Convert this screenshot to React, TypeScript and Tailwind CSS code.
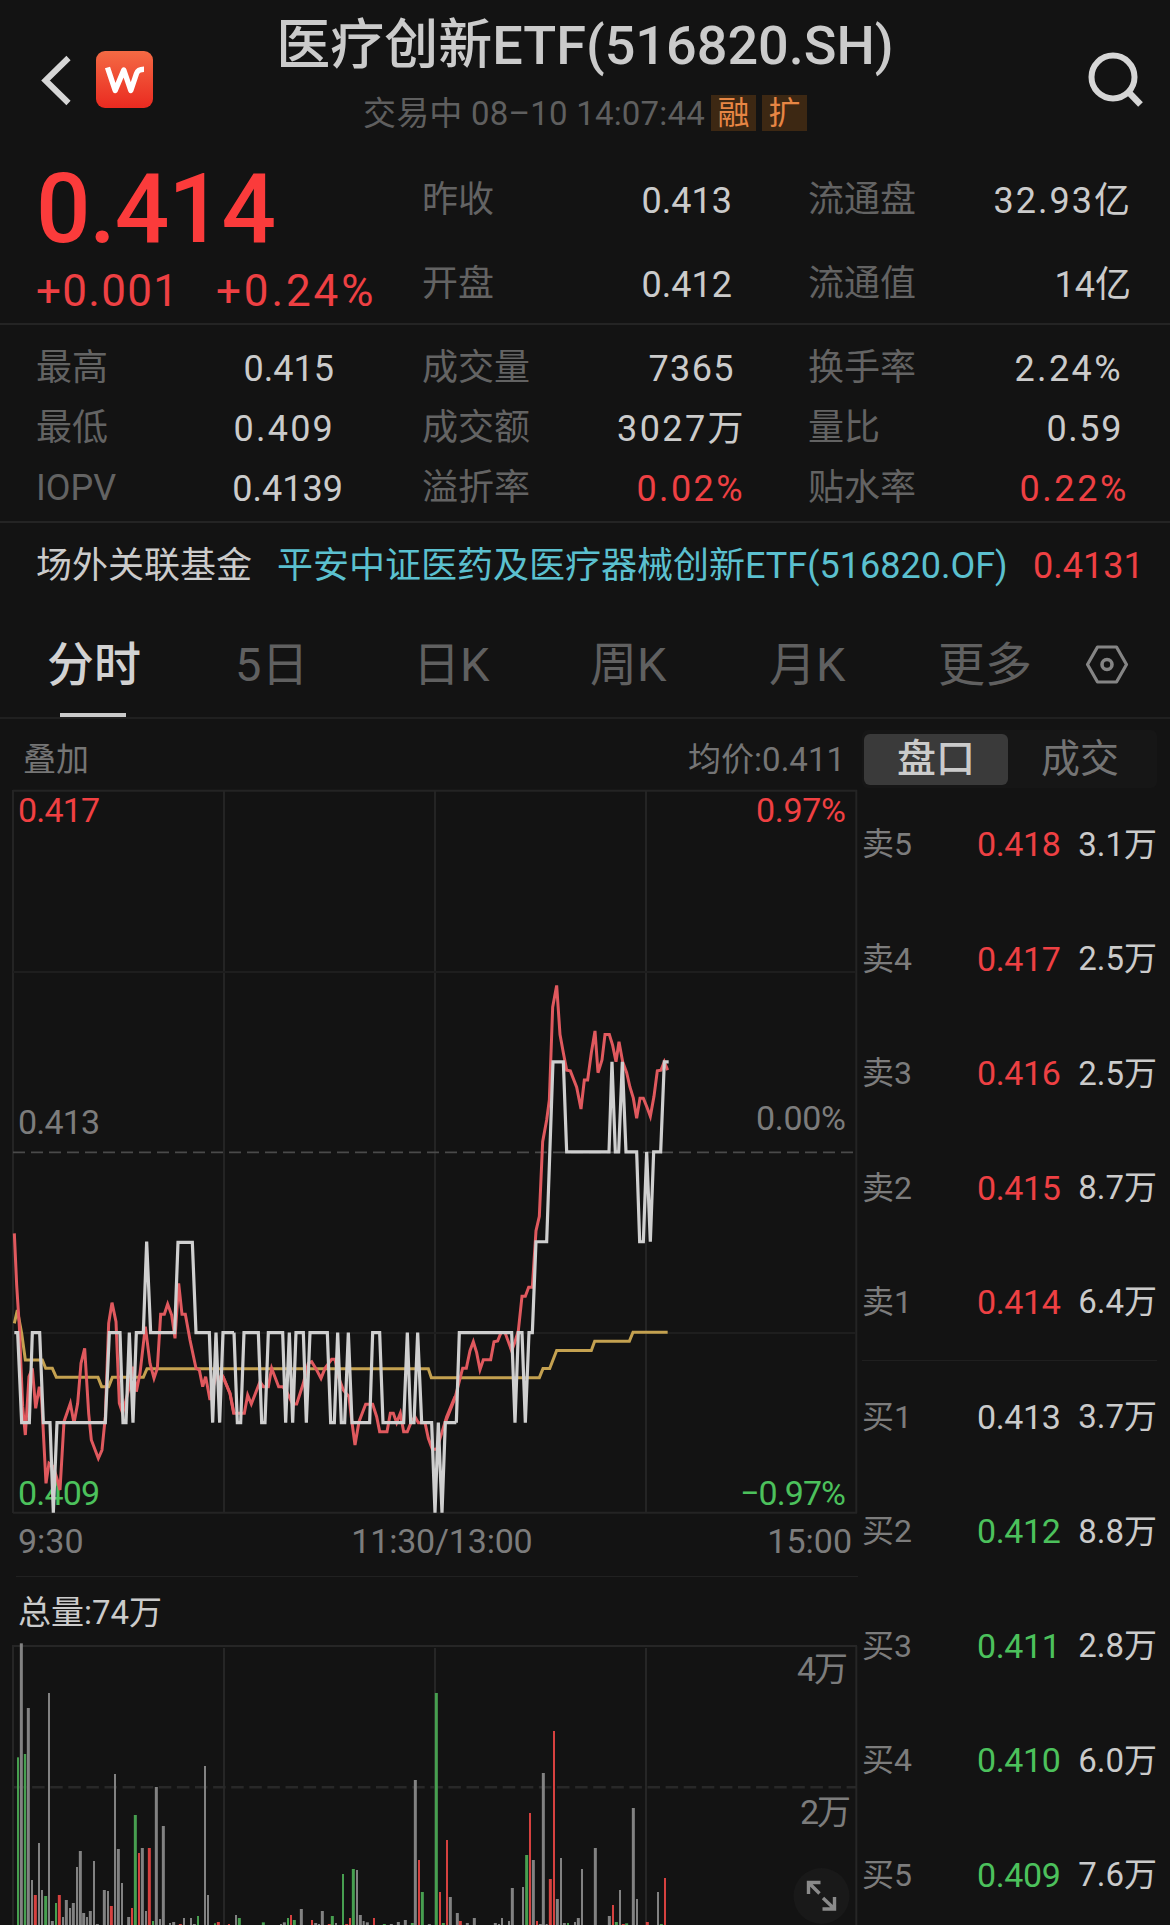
import React from "react";

type Tone = "r" | "g" | "n";

const toneText: Record<Tone, string> = {
  r: "text-[#ee4043]",
  g: "text-[#4cc15c]",
  n: "text-[#cbcbcb]",
};

const barFill: Record<Tone, string> = { r: "#d6413f", g: "#479f50", n: "#828282" };

/* Price polylines: morning session in two parts, then the afternoon. */
const sections = [
  {
    transform: "translate(0 1200) scale(0.33333)",
    avg: "43,370 52,330 65,400 76,480 127,480 137,505 157,505 169,532 294,532 305,560 326,560 337,532 430,532 441,506 702,506",
    index:
      "43,100 50,255 58,380 68,620 76,705 87,530 97,505 107,625 118,560 125,600 138,850 147,790 160,800 172,840 180,870 192,665 211,610 222,670 233,610 243,490 254,445 266,640 274,720 295,775 306,750 316,650 326,370 336,308 348,365 358,610 368,640 378,600 388,560 399,500 409,575 420,520 436,380 450,490 462,535 472,505 482,343 493,343 503,312 515,345 525,415 536,250 546,343 556,343 570,420 588,505 598,510 608,560 617,530 630,600 640,560 650,520 660,540 669,530 690,580 702,640",
    price:
      "43,398 53,398 65,668 88,668 97,398 119,398 130,668 150,668 160,938 171,668 316,668 328,398 360,398 369,668 378,668 388,398 399,668 409,398 430,398 440,125 452,398 524,398 534,127 577,127 588,398 628,398 638,668 648,398 659,668 669,398 702,398",
  },
  {
    transform: "translate(225 1200) scale(0.33333)",
    avg: "27,506 610,506 619,533 704,533",
    index:
      "-6,530 15,580 26,640 58,640 68,585 79,612 105,545 115,560 130,560 140,505 161,560 173,560 185,575 203,612 215,612 235,550 250,490 260,485 275,510 288,535 300,505 320,478 330,478 340,530 355,570 372,590 380,660 390,735 402,665 422,613 443,613 455,650 464,695 486,695 496,640 505,640 515,668 526,640 536,695 547,695 559,665 570,650 580,668 600,668 610,715 622,748 635,748 650,700 665,650 690,590",
    price:
      "27,398 37,668 47,668 57,398 100,398 110,668 120,668 130,398 173,398 182,668 193,398 203,668 213,398 235,398 244,668 255,398 307,398 317,668 328,668 338,398 349,668 359,668 370,398 381,668 434,668 443,398 464,398 474,668 536,668 547,398 557,668 567,668 578,398 590,668 620,668 630,938 640,668 651,938 661,668 694,668",
  },
  {
    transform: "translate(400 960) scale(0.33333 0.36352)",
    avg: "170,1149 418,1149 429,1124 449,1124 470,1074 574,1074 584,1049 688,1049 699,1024 803,1024",
    index:
      "137,1270 165,1205 188,1123 199,1123 210,1075 220,1050 230,1080 240,1127 250,1100 272,1100 282,1050 293,1048 303,1025 315,1025 335,1075 345,1050 355,1020 366,925 376,925 386,900 397,900 408,745 418,705 428,500 440,440 448,385 458,130 470,70 480,205 490,255 500,303 511,305 530,350 543,410 553,330 563,330 574,255 585,195 594,310 606,275 615,205 628,205 638,235 648,280 657,225 668,280 680,310 690,350 700,380 710,435 720,380 730,380 740,403 751,430 762,375 772,305 783,303 793,280 803,303",
    price:
      "169,1273 178,1025 335,1025 345,1273 355,1025 366,1025 376,1273 387,1025 397,1025 408,775 440,775 459,280 490,280 500,528 627,528 636,280 646,528 656,528 667,280 678,528 710,528 719,775 730,775 740,528 751,775 761,528 782,528 793,280 806,280",
  },
];

/* Volume bars: centre x, top y, width (thirds of a pixel) and tone. */
const bars: [number, number, number, Tone][] = [
  [54, 682, 6, "g"], [64, 340, 9, "n"], [75, 672, 7, "g"], [85, 534, 9, "n"], [96, 1050, 6, "n"],
  [106, 1095, 9, "r"], [117, 939, 6, "n"], [126, 1080, 6, "n"], [137, 1098, 9, "g"], [147, 489, 6, "n"],
  [157, 1173, 9, "n"], [168, 1119, 6, "g"], [178, 1095, 9, "r"], [189, 1161, 6, "n"], [199, 1110, 9, "n"],
  [210, 1134, 6, "n"], [220, 1119, 9, "n"], [231, 1011, 6, "n"], [241, 963, 9, "n"], [251, 1149, 9, "n"],
  [261, 1161, 6, "n"], [271, 1143, 9, "n"], [282, 993, 6, "n"], [292, 1182, 9, "n"], [313, 1080, 9, "n"],
  [324, 1083, 6, "n"], [334, 1128, 9, "r"], [345, 732, 6, "n"], [355, 957, 9, "n"], [366, 1059, 6, "n"],
  [386, 1161, 9, "n"], [396, 1134, 6, "r"], [406, 855, 9, "g"], [417, 969, 6, "r"], [427, 954, 9, "n"],
  [438, 1143, 6, "n"], [448, 954, 9, "r"], [459, 1173, 6, "g"], [469, 771, 9, "n"], [480, 1167, 6, "n"],
  [490, 888, 9, "n"], [510, 1179, 6, "n"], [521, 1176, 9, "n"], [541, 1182, 9, "r"], [552, 1164, 6, "n"],
  [573, 1164, 6, "n"], [583, 1182, 9, "n"], [594, 1158, 6, "g"], [615, 708, 6, "n"], [624, 1095, 6, "n"],
  [645, 1180, 6, "g"], [655, 1176, 9, "r"], [687, 1182, 6, "r"], [708, 1155, 6, "n"], [718, 1164, 9, "g"],
  [790, 1177, 9, "g"], [843, 1182, 6, "n"], [853, 1177, 9, "n"], [864, 1164, 6, "g"], [873, 1155, 6, "r"],
  [883, 1170, 9, "g"], [904, 1137, 9, "n"], [936, 1170, 6, "r"], [947, 1179, 9, "n"], [957, 1182, 6, "n"],
  [967, 1143, 9, "n"], [988, 1182, 9, "r"], [997, 1158, 9, "g"], [1008, 1179, 6, "n"], [1029, 1032, 6, "g"],
  [1040, 1182, 9, "r"], [1050, 1164, 6, "r"], [1060, 1017, 9, "g"], [1071, 1020, 6, "n"], [1081, 1155, 9, "n"],
  [1091, 1173, 6, "n"], [1102, 1177, 9, "n"], [1122, 1164, 6, "r"], [1153, 1182, 9, "g"], [1174, 1182, 9, "n"],
  [1195, 1176, 9, "n"], [1216, 1170, 9, "n"], [1237, 1179, 9, "g"], [1246, 750, 9, "n"], [1257, 990, 6, "r"],
  [1267, 1086, 9, "g"], [1288, 1182, 9, "n"], [1309, 489, 9, "g"], [1320, 1086, 6, "r"], [1330, 1179, 9, "g"],
  [1341, 930, 6, "r"], [1351, 1101, 9, "n"], [1372, 1149, 9, "n"], [1381, 1173, 9, "r"], [1402, 1179, 9, "n"],
  [1423, 1164, 9, "n"], [1486, 1179, 9, "n"], [1497, 1182, 6, "n"], [1506, 1164, 6, "n"], [1527, 1173, 6, "n"],
  [1537, 1074, 9, "n"], [1569, 1071, 6, "n"], [1580, 975, 9, "g"], [1590, 849, 6, "r"], [1600, 990, 9, "n"],
  [1611, 1173, 6, "r"], [1621, 1182, 9, "n"], [1630, 729, 9, "n"], [1640, 1182, 6, "n"], [1651, 1047, 9, "r"],
  [1662, 603, 6, "r"], [1672, 1107, 9, "n"], [1683, 984, 6, "n"], [1693, 1179, 9, "n"], [1704, 1179, 6, "g"],
  [1725, 1176, 6, "n"], [1735, 1164, 9, "n"], [1746, 1017, 6, "n"], [1786, 954, 9, "n"], [1828, 1158, 9, "n"],
  [1839, 1125, 6, "r"], [1849, 1176, 9, "g"], [1860, 1080, 6, "n"], [1870, 1182, 9, "r"], [1880, 1180, 9, "g"],
  [1900, 834, 9, "n"], [1911, 1107, 6, "n"], [1942, 1176, 9, "r"], [1974, 1086, 6, "n"], [1984, 1182, 9, "g"],
  [1995, 1044, 6, "r"],
];

function ChartLabel({ x, y, w, fill, children }: { x: number; y: number; w: number; fill: string; children: string }) {
  return (
    <text x={x} y={y} fontSize={34} fill={fill} textLength={w} lengthAdjust="spacing">
      {children}
    </text>
  );
}

function PriceChart() {
  return (
    <svg className="block h-[726px] w-[858px]" viewBox="0 789 858 726" fill="none">
      <g stroke="#242424" strokeWidth={2}>
        <path d="M13 790.7H857M13 1512.7H857" />
        <path d="M13 790V1513M224 790V1513M435 790V1513M646 790V1513M856.3 790V1513" />
        <path d="M13 972H856M13 1333H856" stroke="#1e1e1e" />
      </g>
      <path d="M13 1152.3H856" stroke="#4a4a4a" strokeWidth={1.8} strokeDasharray="12 6" />
      <ChartLabel x={18} y={822} w={82} fill="#f04042">0.417</ChartLabel>
      <ChartLabel x={756} y={822} w={90} fill="#f04042">0.97%</ChartLabel>
      <ChartLabel x={18} y={1134} w={82} fill="#7c7c7c">0.413</ChartLabel>
      <ChartLabel x={756} y={1130} w={90} fill="#7c7c7c">0.00%</ChartLabel>
      <ChartLabel x={18} y={1505} w={82} fill="#4cc15c">0.409</ChartLabel>
      <ChartLabel x={740} y={1505} w={106} fill="#4cc15c">−0.97%</ChartLabel>
      {(["avg", "index", "price"] as const).map((key) => (
        <g
          key={key}
          stroke={key === "avg" ? "#c4a150" : key === "index" ? "#e0595e" : "#cfcfcf"}
          strokeWidth={key === "price" ? 3.2 : 3}
        >
          {sections.map((s) => (
            <polyline key={s.transform} points={s[key]} transform={s.transform} vectorEffect="non-scaling-stroke" />
          ))}
        </g>
      ))}
    </svg>
  );
}

function VolumeChart() {
  return (
    <svg className="block h-[285px] w-[858px]" viewBox="0 1640 858 285" fill="none">
      <path d="M12 1646H857M13 1646V1925M224 1648V1925M435 1648V1925M646 1648V1925M856.3 1646V1925" stroke="#262626" strokeWidth={2} />
      <path d="M14 1787.3H856" stroke="#282828" strokeWidth={2.6} strokeDasharray="12.5 5.6" />
      {bars.map(([x, top, w, tone]) => (
        <rect key={x} x={(x - w / 2) / 3} y={1530 + top / 3} width={w / 3} height={400} fill={barFill[tone]} />
      ))}
      <ChartLabel x={797} y={1681} w={51} fill="#7c7c7c">4万</ChartLabel>
      <ChartLabel x={800} y={1824} w={51} fill="#7c7c7c">2万</ChartLabel>
      <circle cx={821.5} cy={1896} r={28} fill="#191919" />
      <path
        d="M808.5 1894V1882.5H820.5M809 1883L819.5 1893.5M834.5 1897V1909H822.5M834 1908.500L823 1898"
        stroke="#8a8a8a"
        strokeWidth={3.4}
      />
    </svg>
  );
}

function Cell({ label, value, tone = "n", className }: { label: string; value: string; tone?: Tone; className: string }) {
  return (
    <div className="flex w-[386px] shrink-0 items-center justify-between whitespace-nowrap leading-none">
      <span className="text-[36px] text-[#636363]">{label}</span>
      <span className={`pt-[2px] text-[36px] ${toneText[tone]} ${className}`}>{value}</span>
    </div>
  );
}

const tabs = [
  { label: "5日", className: "w-[178px]" },
  { label: "日K", className: "w-[177px]" },
  { label: "周K", className: "w-[179px]" },
  { label: "月K", className: "w-[169px]" },
  { label: "更多", className: "w-[147px]" },
];

const book: { label: string; price: string; volume: string; tone: Tone }[] = [
  { label: "卖5", price: "0.418", volume: "3.1万", tone: "r" },
  { label: "卖4", price: "0.417", volume: "2.5万", tone: "r" },
  { label: "卖3", price: "0.416", volume: "2.5万", tone: "r" },
  { label: "卖2", price: "0.415", volume: "8.7万", tone: "r" },
  { label: "卖1", price: "0.414", volume: "6.4万", tone: "r" },
  { label: "买1", price: "0.413", volume: "3.7万", tone: "n" },
  { label: "买2", price: "0.412", volume: "8.8万", tone: "g" },
  { label: "买3", price: "0.411", volume: "2.8万", tone: "g" },
  { label: "买4", price: "0.410", volume: "6.0万", tone: "g" },
  { label: "买5", price: "0.409", volume: "7.6万", tone: "g" },
];

function Header() {
  return (
    <header className="flex h-[145px] items-start justify-between">
      <div className="flex w-[240px] items-center pt-[50px] pl-[40px]">
        <svg className="mr-[22px] h-[58px] w-[34px]" viewBox="0 0 34 58" fill="none">
          <path d="M28.500 8L5.500 30.500L28.500 53" stroke="#d6d6d6" strokeWidth={6} />
        </svg>
        <svg className="h-[57px] w-[57px]" viewBox="0 0 57 57" fill="none">
          <defs>
            <linearGradient id="logo" x1="0" y1="0" x2="0" y2="1">
              <stop offset="0" stopColor="#f46a44" />
              <stop offset="1" stopColor="#ea2a20" />
            </linearGradient>
          </defs>
          <rect width="57" height="57" rx="9" fill="url(#logo)" />
          <path d="M11.500 16.500L19.200 39.500L27.800 19L34.800 39.500L40.500 22.500Q42 18.300 48 18.300" stroke="#fff" strokeWidth={5.4} strokeLinejoin="round" />
        </svg>
      </div>
      <div className="flex flex-col items-center whitespace-nowrap leading-none">
        <h1 className="mt-[19px] text-[54px] font-medium text-[#cbcbcb]">医疗创新ETF(516820.SH)</h1>
        <div className="mt-[22px] flex h-[36px] items-center">
          <span className="text-[33px] tracking-[0.2px] text-[#5f5f5f]">交易中 08–10 14:07:44</span>
          <span className="ml-[6px] flex h-[36px] w-[45px] items-center justify-center bg-[#3d2813] text-[32px] text-[#e78644]">融</span>
          <span className="ml-[6px] flex h-[36px] w-[45px] items-center justify-center bg-[#3d2813] text-[32px] text-[#e78644]">扩</span>
        </div>
      </div>
      <div className="flex w-[240px] justify-end pt-[48px] pr-[24px]">
        <svg className="h-[62px] w-[60px]" viewBox="0 0 60 62" fill="none" stroke="#d6d6d6">
          <circle cx="27" cy="29" r="21.500" strokeWidth={6} />
          <path d="M42 43.500L54.500 56.500" strokeWidth={6.500} />
        </svg>
      </div>
    </header>
  );
}

export default function App() {
  return (
    <div className="h-[1925px] w-[1170px] overflow-hidden bg-[#131313] font-['Roboto','Noto_Sans_CJK_SC',sans-serif] text-[#cbcbcb]">
      <Header />

      <section className="flex h-[180px] border-b-2 border-[#242424] pl-[36px]">
        <div className="w-[386px] shrink-0 whitespace-nowrap leading-none">
          <div className="mt-[16px] text-[96px] font-medium tracking-[-1.2px] text-[#fb3b3b]">0.414</div>
          <div className="mt-[12px] flex text-[44px] text-[#ee4043]">
            <span className="w-[180px] tracking-[1.3px]">+0.001</span>
            <span className="tracking-[2.9px]">+0.24%</span>
          </div>
        </div>
        <div className="pt-[13px]">
          <div className="flex h-[84px]">
            <Cell label="昨收" value="0.413" className="pr-[76px]" />
            <Cell label="流通盘" value="32.93亿" className="pr-[62px] tracking-[2px]" />
          </div>
          <div className="flex h-[84px]">
            <Cell label="开盘" value="0.412" className="pr-[76px]" />
            <Cell label="流通值" value="14亿" className="pr-[63px]" />
          </div>
        </div>
      </section>

      <section className="flex h-[198px] flex-col border-b-2 border-[#242424] pt-[13px] pl-[36px]">
        <div className="flex h-[60px]">
          <Cell label="最高" value="0.415" className="pr-[88px]" />
          <Cell label="成交量" value="7365" className="pr-[73px] tracking-[1.4px]" />
          <Cell label="换手率" value="2.24%" className="pr-[71px] tracking-[2.4px]" />
        </div>
        <div className="flex h-[60px]">
          <Cell label="最低" value="0.409" className="pr-[87px] tracking-[2.2px]" />
          <Cell label="成交额" value="3027万" className="pr-[62px] tracking-[2.4px]" />
          <Cell label="量比" value="0.59" className="pr-[71px] tracking-[1.6px]" />
        </div>
        <div className="flex h-[60px]">
          <Cell label="IOPV" value="0.4139" className="pr-[79px]" />
          <Cell label="溢折率" value="0.02%" tone="r" className="pr-[63px] tracking-[2.4px]" />
          <Cell label="贴水率" value="0.22%" tone="r" className="pr-[65px] tracking-[2.6px]" />
        </div>
      </section>

      <section className="flex h-[88px] items-center pb-[2px] pl-[36px] text-[36px] leading-none whitespace-nowrap">
        <span className="w-[241px]">场外关联基金</span>
        <span className="w-[756px] text-[#5bc0cf]">平安中证医药及医疗器械创新ETF(516820.OF)</span>
        <span className="text-[#ee4043]">0.4131</span>
      </section>

      <nav className="flex h-[108px] border-b-2 border-[#202020] pl-[47px] text-[47px] leading-none whitespace-nowrap text-[#606060]">
        <div className="flex h-[106px] w-[188px] flex-col">
          <span className="flex h-[102px] items-center pt-[5px] font-medium text-[#d2d2d2]">分时</span>
          <span className="ml-[13px] h-[4px] w-[66px] bg-[#cbcbcb]" />
        </div>
        {tabs.map((t) => (
          <span key={t.label} className={`flex h-[102px] items-center pt-[5px] ${t.className}`}>
            {t.label}
          </span>
        ))}
        <svg className="mt-[32px] h-[42px] w-[46px]" viewBox="0 0 46 42" fill="none" stroke="#858585" strokeWidth={3.2}>
          <path d="M12.500 4H31.500L41.500 21.500L31.500 39H12.500L2.500 21.500Z" strokeLinejoin="round" />
          <circle cx="22" cy="21.500" r="5" strokeWidth={3.600} />
        </svg>
      </nav>

      <main className="flex h-[1206px]">
        <div className="w-[858px] shrink-0">
          <div className="flex h-[70px] items-center justify-between pt-[10px] pr-[13px] pl-[23px] text-[33px] leading-none text-[#757575]">
            <span>叠加</span>
            <span>均价:0.411</span>
          </div>
          <PriceChart />
          <div className="ml-[16px] flex h-[62px] items-start justify-between border-b border-[#212121] pt-[9px] pr-[6px] pl-[2px] text-[34px] leading-none text-[#7c7c7c]">
            <span>9:30</span>
            <span className="pl-[33px] tracking-[-0.2px]">11:30/13:00</span>
            <span>15:00</span>
          </div>
          <div className="flex h-[63px] items-center pt-[8px] pl-[18px] text-[33px] leading-none text-[#cbcbcb]">总量:74万</div>
          <VolumeChart />
        </div>

        <aside className="w-[312px] pl-[4px]">
          <div className="mt-[11px] flex h-[58px] w-[295px] items-center rounded-[6px] bg-[#161616] pl-[2px] text-[39px] leading-none">
            <span className="flex h-[51px] w-[144px] items-center justify-center rounded-[6px] bg-[#3a3a3a] font-medium text-[#cbcbcb]">盘口</span>
            <span className="flex w-[144px] items-center justify-center text-[#747474]">成交</span>
          </div>
          {book.map((row, i) => (
            <div
              key={row.label}
              className={`flex h-[114.5px] w-[295px] items-center pb-[2px] text-[34px] leading-none whitespace-nowrap ${i === 4 ? "border-b border-[#1f1f1f]" : ""}`}
            >
              <span className="w-[117px] text-[32px] text-[#7c7c7c]">{row.label}</span>
              <span className={`w-[103px] tracking-[-0.4px] ${toneText[row.tone]}`}>{row.price}</span>
              <span className="text-[33px] text-[#cbcbcb]">{row.volume}</span>
            </div>
          ))}
        </aside>
      </main>
    </div>
  );
}
